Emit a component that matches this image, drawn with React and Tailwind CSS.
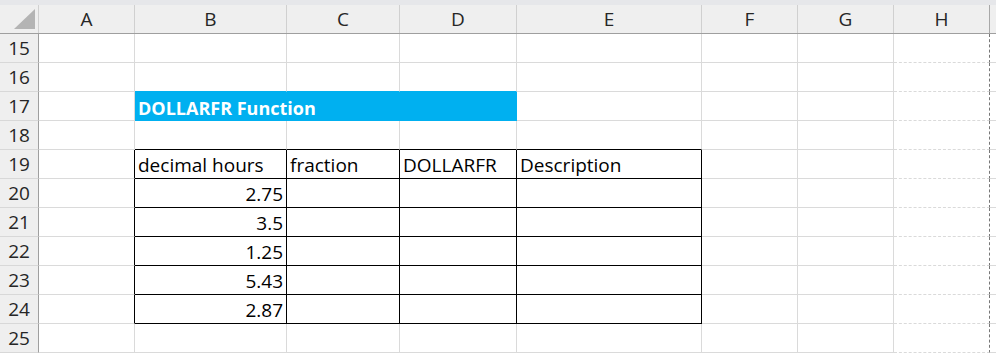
import React from 'react';

// column letters with their widths (each width includes the 1px gridline on the right)
const COLS = [
  { name: 'A', w: 'w-[96px]' },
  { name: 'B', w: 'w-[152px]' },
  { name: 'C', w: 'w-[113px]' },
  { name: 'D', w: 'w-[117px]' },
  { name: 'E', w: 'w-[185px]' },
  { name: 'F', w: 'w-[96px]' },
  { name: 'G', w: 'w-[96px]' },
  { name: 'H', w: 'w-[96px]' },
];

const ROWS = [15, 16, 17, 18, 19, 20, 21, 22, 23, 24, 25];

const DATA = {
  19: ['decimal hours', 'fraction', 'DOLLARFR', 'Description'],
  20: ['2.75'],
  21: ['3.5'],
  22: ['1.25'],
  23: ['5.43'],
  24: ['2.87'],
};

const inTable = (row) => row >= 19 && row <= 24;

const Cell = ({ row, col, idx }) => {
  const isBlue = row === 17 && idx >= 1 && idx <= 3;
  const blueAbove = row === 16 && idx >= 1 && idx <= 3;
  const blackRight = inTable(row) && idx <= 4;
  const blackBottom = (row >= 18 && row <= 24) && idx >= 1 && idx <= 4;

  let right = 'border-r-[#dadada]';
  if (col.name === 'H') right = 'border-r-[#777777] border-dashed';
  if (isBlue) right = 'border-r-[#00b0f0]';
  if (blackRight) right = 'border-r-black';

  let bottom = 'border-b-[#dadada]';
  if (isBlue || blueAbove) bottom = 'border-b-[#00b0f0]';
  if (blackBottom) bottom = 'border-b-black';

  const value = DATA[row] && idx >= 1 ? DATA[row][idx - 1] : null;
  const numeric = value && !isNaN(Number(value));

  return (
    <div
      className={`${col.w} shrink-0 h-full border-r border-b ${right} ${bottom} ${isBlue ? 'bg-[#00b0f0]' : 'bg-white'} flex items-end pb-[3px] ${numeric ? 'justify-end pr-[3px]' : 'pl-[3px]'}`}
    >
      {value && <span className="whitespace-nowrap text-black leading-none">{value}</span>}
      {row === 17 && idx === 1 && (
        <span className="relative z-10 whitespace-nowrap text-[18px] font-bold text-white leading-none">
          DOLLARFR Function
        </span>
      )}
    </div>
  );
};

export default function App() {
  return (
    <div
      className="w-[996px] h-[354px] overflow-hidden bg-white text-[19px]"
      style={{ fontFamily: '"Open Sans", "Liberation Sans", sans-serif' }}
    >
      {/* thin strip above the sheet */}
      <div className="h-[5px] bg-[#e6e7ea]" />

      {/* column headers */}
      <div className="flex h-[29px] bg-[#efefef] border-b border-b-[#9f9f9f]">
        <div className="w-[39px] shrink-0 h-full border-r border-r-[#d0d0d0] relative">
          <svg className="absolute left-[14px] top-[4px]" width="21" height="20" viewBox="0 0 21 20">
            <polygon points="21,0 21,20 0,20" fill="#b4b4b4" />
          </svg>
        </div>
        {COLS.map((c) => (
          <div
            key={c.name}
            className={`${c.w} shrink-0 h-full border-r ${c.name === 'H' ? 'border-r-[#a8a8a8]' : 'border-r-[#d0d0d0]'} flex items-center justify-center text-[#262626]`}
          >
            {c.name}
          </div>
        ))}
        <div className="flex-1 h-full" />
      </div>

      {/* sheet body */}
      {ROWS.map((r) => (
        <div key={r} className="flex h-[29px]">
          <div className="w-[39px] shrink-0 h-full bg-[#efefef] border-r border-r-[#9f9f9f] border-b border-b-[#d8d8d8] flex items-center justify-center text-[#262626]">
            {r}
          </div>
          {COLS.map((c, i) => (
            <Cell key={c.name} row={r} col={c} idx={i} />
          ))}
          <div className="flex-1 h-full border-b border-b-[#dadada]" />
        </div>
      ))}
    </div>
  );
}
